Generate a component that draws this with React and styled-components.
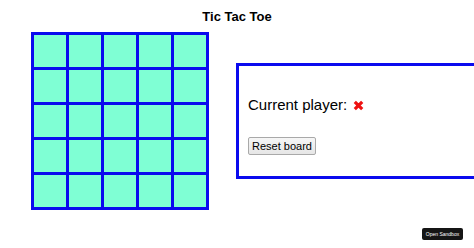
import React, { useState } from 'react';
import styled, { createGlobalStyle } from 'styled-components';

const GlobalStyle = createGlobalStyle`
  html, body {
    margin: 0;
    padding: 0;
    background: #ffffff;
    overflow: hidden;
  }
  body {
    font-family: "Liberation Sans", Arial, sans-serif;
    color: #000;
  }
`;

const Page = styled.div`
  width: 474px;
  height: 248px;
  overflow: hidden;
`;

const Title = styled.h1`
  margin: 9px 0 0;
  font-size: 13px;
  line-height: 16px;
  font-weight: bold;
  text-align: center;
`;

const Row = styled.div`
  display: flex;
  align-items: center;
  gap: 27px;
  padding: 7px 0 0 31px;
`;

const Board = styled.div`
  display: grid;
  grid-template-columns: repeat(5, 32px);
  grid-auto-rows: 32px;
  gap: 3px;
  padding: 3px;
  background: #0a0aee;
  flex-shrink: 0;
`;

const Cell = styled.div`
  background: #7fffd4;
  cursor: pointer;
`;

const Panel = styled.div`
  flex-shrink: 0;
  width: 260px;
  border: 3px solid #0a0aee;
  padding: 30px 9px 21px;
`;

const Status = styled.p`
  margin: 0 0 22px;
  font-size: 15px;
  line-height: 18px;
  display: flex;
  align-items: center;
`;

const Mark = styled.svg`
  width: 11px;
  height: 11px;
  margin-left: 2px;
`;

const ResetButton = styled.button`
  font-family: "Liberation Sans", Arial, sans-serif;
  font-size: 11px;
  height: 18px;
  padding: 0 3px;
  border: 1px solid #a9a9a9;
  border-radius: 2px;
  background: linear-gradient(#f6f6f6, #e6e6e6);
  color: #000;
  cursor: pointer;
`;

const SandboxLink = styled.div`
  position: fixed;
  right: 11px;
  bottom: 8px;
  width: 41px;
  height: 12px;
  background: #151515;
  border-radius: 2px;
  color: #fff;
  font-size: 5px;
  display: flex;
  align-items: center;
  justify-content: center;
`;

const XMark = () => (
  <Mark viewBox="0 0 11 11">
    <path d="M1.8 1.8 L9.2 9.2 M9.2 1.8 L1.8 9.2" stroke="#ee1111" strokeWidth="3.2" />
  </Mark>
);

const App = () => {
  const [cells, setCells] = useState(Array(25).fill(null));

  return (
    <Page>
      <GlobalStyle />
      <Title>Tic Tac Toe</Title>
      <Row>
        <Board>
          {cells.map((c, i) => (
            <Cell key={i} />
          ))}
        </Board>
        <Panel>
          <Status>
            Current player:&nbsp;<XMark />
          </Status>
          <ResetButton onClick={() => setCells(Array(25).fill(null))}>Reset board</ResetButton>
        </Panel>
      </Row>
      <SandboxLink>Open Sandbox</SandboxLink>
    </Page>
  );
};

export default App;
